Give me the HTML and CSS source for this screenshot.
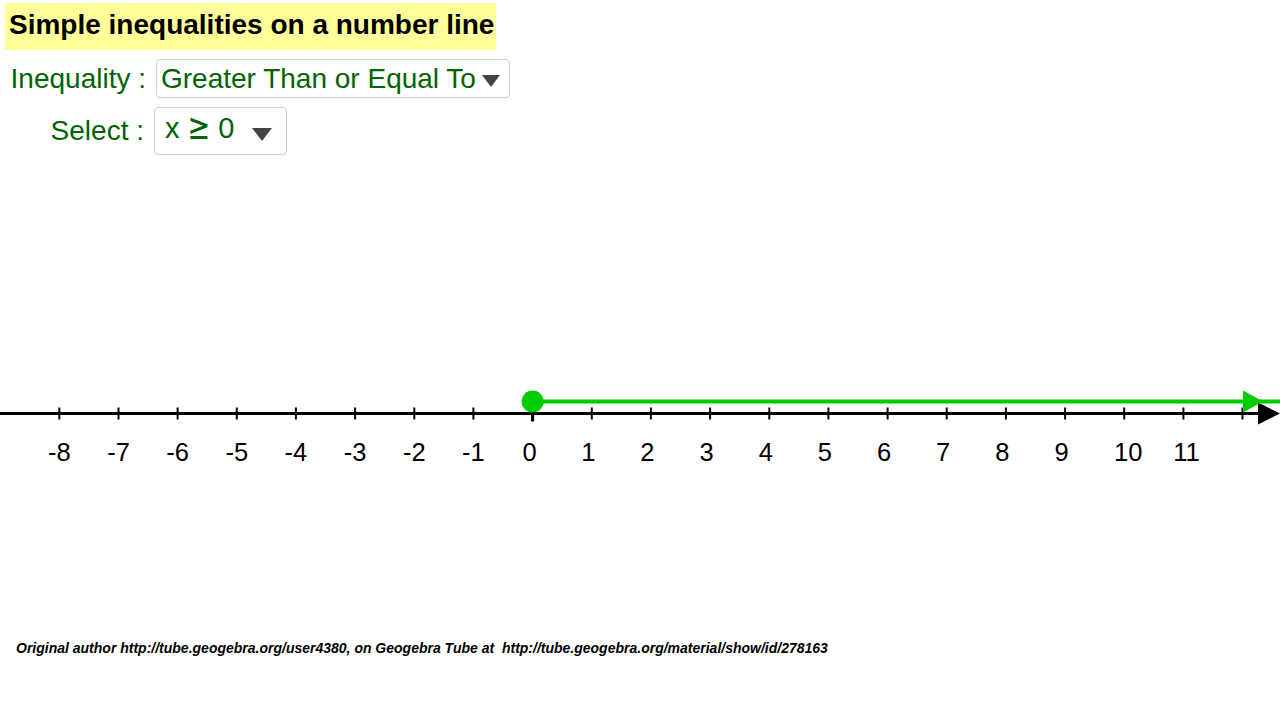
FILE: index.html
```html
<!DOCTYPE html>
<html lang="en">
<head>
<meta charset="utf-8">
<title>Simple inequalities on a number line</title>
<link rel="stylesheet" href="styles.css">
</head>
<body>
<div class="applet">
  <h1 class="title">Simple inequalities on a number line</h1>
  <div class="form">
    <div class="row row-ineq">
      <span class="label label-ineq">Inequality :</span>
      <div class="dropdown dropdown-ineq">
        <span class="value">Greater Than or Equal To</span>
        <span class="caret"></span>
      </div>
    </div>
    <div class="row row-select">
      <span class="label label-select">Select :</span>
      <div class="dropdown dropdown-select">
        <span class="value value-math">x <span class="geq">≥</span> 0</span>
        <span class="caret caret-lg"></span>
      </div>
    </div>
  </div>

  <svg class="numline" width="1280" height="100" viewBox="0 380 1280 100" xmlns="http://www.w3.org/2000/svg">
    <line x1="0" y1="412.5" x2="1264" y2="412.5" stroke="#000" stroke-width="3"/>
    <polygon points="1258,401.5 1280,412.5 1258,423.5" fill="#000"/>
    <g stroke="#000" stroke-width="2">
      <line x1="59.3" y1="406.5" x2="59.3" y2="418.5"/>
      <line x1="118.5" y1="406.5" x2="118.5" y2="418.5"/>
      <line x1="177.6" y1="406.5" x2="177.6" y2="418.5"/>
      <line x1="236.8" y1="406.5" x2="236.8" y2="418.5"/>
      <line x1="295.9" y1="406.5" x2="295.9" y2="418.5"/>
      <line x1="355.1" y1="406.5" x2="355.1" y2="418.5"/>
      <line x1="414.3" y1="406.5" x2="414.3" y2="418.5"/>
      <line x1="473.4" y1="406.5" x2="473.4" y2="418.5"/>
      <line x1="591.8" y1="406.5" x2="591.8" y2="418.5"/>
      <line x1="650.9" y1="406.5" x2="650.9" y2="418.5"/>
      <line x1="710.1" y1="406.5" x2="710.1" y2="418.5"/>
      <line x1="769.3" y1="406.5" x2="769.3" y2="418.5"/>
      <line x1="828.4" y1="406.5" x2="828.4" y2="418.5"/>
      <line x1="887.6" y1="406.5" x2="887.6" y2="418.5"/>
      <line x1="946.7" y1="406.5" x2="946.7" y2="418.5"/>
      <line x1="1005.9" y1="406.5" x2="1005.9" y2="418.5"/>
      <line x1="1065.1" y1="406.5" x2="1065.1" y2="418.5"/>
      <line x1="1124.2" y1="406.5" x2="1124.2" y2="418.5"/>
      <line x1="1183.4" y1="406.5" x2="1183.4" y2="418.5"/>
      <line x1="1242.5" y1="406.5" x2="1242.5" y2="418.5"/>
    </g>
    <line x1="532.6" y1="406" x2="532.6" y2="420.5" stroke="#000" stroke-width="3"/>

    <line x1="533" y1="400.5" x2="1280" y2="400.5" stroke="#00cc00" stroke-width="4"/>
    <polygon points="1243,389.5 1263,400.5 1243,411.5" fill="#00cc00"/>
    <circle cx="532.6" cy="400.5" r="11" fill="#00cc00"/>

    <g class="ticklabels" font-family="Liberation Sans, Arial, sans-serif" font-size="25.5" fill="#000" text-anchor="middle">
      <text x="59.3" y="460">-8</text>
      <text x="118.5" y="460">-7</text>
      <text x="177.6" y="460">-6</text>
      <text x="236.8" y="460">-5</text>
      <text x="295.9" y="460">-4</text>
      <text x="355.1" y="460">-3</text>
      <text x="414.3" y="460">-2</text>
      <text x="473.4" y="460">-1</text>
      <text x="529.6" y="460">0</text>
      <text x="588.3" y="460">1</text>
      <text x="647.4" y="460">2</text>
      <text x="706.6" y="460">3</text>
      <text x="765.8" y="460">4</text>
      <text x="824.9" y="460">5</text>
      <text x="884.1" y="460">6</text>
      <text x="943.2" y="460">7</text>
      <text x="1002.4" y="460">8</text>
      <text x="1061.6" y="460">9</text>
      <text x="1128.2" y="460">10</text>
      <text x="1186.4" y="460">11</text>
    </g>
  </svg>

  <p class="credit">Original author http://tube.geogebra.org/user4380, on Geogebra Tube at&nbsp; http://tube.geogebra.org/material/show/id/278163</p>
</div>
</body>
</html>
```

FILE: styles.css
```css
html, body {
  margin: 0;
  padding: 0;
  background: #ffffff;
}

.applet {
  width: 1280px;
  height: 703px;
  display: flex;
  flex-direction: column;
  font-family: "Liberation Sans", Arial, sans-serif;
  overflow: hidden;
}

.title {
  margin: 3px 0 0 5px;
  width: 487px;
  height: 47px;
  padding-left: 4px;
  line-height: 43px;
  font-size: 28px;
  font-weight: bold;
  color: #000;
  background: #ffff99;
  white-space: nowrap;
}

.form {
  display: flex;
  flex-direction: column;
  gap: 9px;
  margin-top: 9px;
}

.row {
  display: flex;
  align-items: center;
}

.label {
  color: #006400;
  font-size: 28px;
  text-align: right;
  white-space: nowrap;
  margin-right: 10px;
}

.label-ineq {
  width: 146px;
}

.label-select {
  width: 144px;
}

.dropdown {
  box-sizing: border-box;
  display: flex;
  align-items: center;
  background: #fff;
  border: 1px solid #cfcfcf;
  border-radius: 4px;
  color: #006400;
  white-space: nowrap;
}

.dropdown-ineq {
  width: 354px;
  height: 39px;
  padding-left: 4px;
  font-size: 28px;
}

.dropdown-select {
  width: 133px;
  height: 48px;
  padding-left: 10px;
  font-size: 29px;
}

.value-math {
  position: relative;
  top: -3px;
}

.geq {
  display: inline-block;
  font-family: "DejaVu Sans", sans-serif;
  font-size: 27px;
  line-height: 1;
  transform: scaleY(1.35);
  transform-origin: 50% 70%;
}

.caret {
  width: 0;
  height: 0;
  margin-left: auto;
  margin-right: 9px;
  border-left: 9px solid transparent;
  border-right: 9px solid transparent;
  border-top: 12px solid #444;
  position: relative;
  top: 2px;
}

.caret-lg {
  margin-right: 14px;
  border-left-width: 10px;
  border-right-width: 10px;
  border-top-width: 13px;
  top: 3px;
}

.numline {
  display: block;
  margin-top: 226px;
  flex: none;
}

.credit {
  margin: 159px 0 0 16px;
  font-size: 14px;
  line-height: 16px;
  font-weight: bold;
  font-style: italic;
  color: #000;
  white-space: nowrap;
}
```
